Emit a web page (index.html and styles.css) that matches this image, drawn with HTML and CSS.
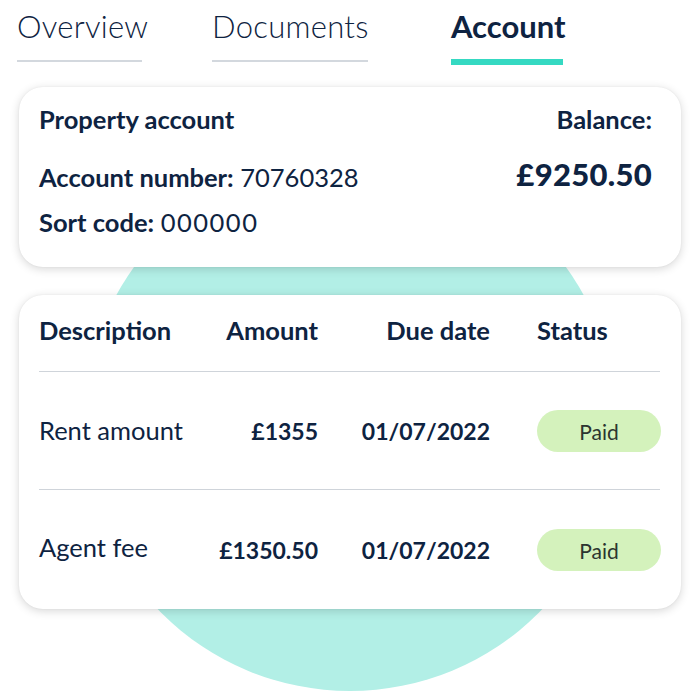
FILE: index.html
```html
<!DOCTYPE html>
<html>
<head>
<meta charset="utf-8">
<link rel="stylesheet" href="styles.css">
</head>
<body>
<div class="page">
  <div class="blob"></div>
  <nav class="tabs">
    <div class="tab tab-overview">Overview</div>
    <div class="tab tab-documents">Documents</div>
    <div class="tab tab-account active">Account</div>
  </nav>
  <section class="card account-card">
    <div class="acc-left">
      <div class="acc-title">Property account</div>
      <div class="acc-line acc-number"><b>Account number:</b> <span class="val">70760328</span></div>
      <div class="acc-line acc-sort"><b>Sort code:</b> <span class="val wide">000000</span></div>
    </div>
    <div class="acc-right">
      <div class="acc-title">Balance:</div>
      <div class="balance">£9250.50</div>
    </div>
  </section>
  <section class="card table-card">
    <div class="row head">
      <div class="c-desc">Description</div>
      <div class="c-amt">Amount</div>
      <div class="c-date">Due date</div>
      <div class="c-status">Status</div>
    </div>
    <div class="row item">
      <div class="c-desc">Rent amount</div>
      <div class="c-amt num">£1355</div>
      <div class="c-date num">01/07/2022</div>
      <div class="c-status"><span class="pill">Paid</span></div>
    </div>
    <div class="row item last">
      <div class="c-desc">Agent fee</div>
      <div class="c-amt num">£1350.50</div>
      <div class="c-date num">01/07/2022</div>
      <div class="c-status"><span class="pill">Paid</span></div>
    </div>
  </section>
</div>
</body>
</html>
```

FILE: styles.css
```css
* { box-sizing: border-box; }
html, body { margin: 0; padding: 0; background: #ffffff; }
body {
  font-family: Lato, "Noto Sans", sans-serif;
  color: #0e2341;
  width: 700px;
  height: 700px;
  overflow: hidden;
}
.page {
  position: relative;
  width: 700px;
  height: 700px;
  padding: 0 19px 0 19px;
}
.blob {
  position: absolute;
  left: 83px;
  top: 157px;
  width: 534px;
  height: 534px;
  border-radius: 50%;
  background: #b2efe6;
  z-index: 0;
}
.tabs {
  position: relative;
  z-index: 1;
  display: flex;
  height: 87px;
  padding-top: 6px;
}
.tab {
  font-size: 31px;
  font-weight: 300;
  line-height: 40px;
  height: 56px;
  letter-spacing: 0.3px;
  border-bottom: 2px solid #d3d8de;
}
.tab-overview { margin-left: -2px; width: 125px; }
.tab-documents { margin-left: 70px; width: 156px; }
.tab-account {
  margin-left: 83px;
  width: 112px;
  font-weight: 700;
  height: 59px;
  border-bottom: 6px solid #35d9c2;
  letter-spacing: 0;
}
.card {
  position: relative;
  z-index: 1;
  background: #fff;
  border-radius: 24px;
  box-shadow: 0 2px 10px rgba(0, 0, 0, 0.16), 0 0 2px rgba(0,0,0,0.06);
}
.account-card {
  height: 180px;
  display: flex;
  justify-content: space-between;
  padding: 16px 29px 0 20px;
}
.acc-title {
  font-size: 25.5px;
  font-weight: 700;
  line-height: 32px;
}
.acc-line {
  font-size: 25.5px;
  font-weight: 400;
  line-height: 32px;
}
.acc-line b { font-weight: 700; }
.val.wide { letter-spacing: 1.5px; }
.acc-number { margin-top: 26px; }
.acc-sort { margin-top: 13px; }
.acc-right { text-align: right; }
.balance {
  font-size: 31px;
  font-weight: 900;
  line-height: 40px;
  margin-top: 19px;
  letter-spacing: 0.3px;
}
.table-card {
  margin-top: 28px;
  height: 314px;
  padding: 0 21px 0 20px;
}
.row {
  display: grid;
  grid-template-columns: 170px 109px 172px 1fr;
  align-items: center;
  font-size: 25.5px;
}
.head {
  height: 77px;
  padding-bottom: 6px;
  font-weight: 700;
  border-bottom: 1px solid #cfd4da;
}
.item {
  height: 118px;
  border-bottom: 1px solid #cfd4da;
}
.item.last { border-bottom: none; height: 119px; }
.c-amt, .c-date { text-align: right; }
.c-status { padding-left: 47px; }
.num { font-weight: 700; font-size: 23px; }
.pill {
  display: flex;
  align-items: center;
  justify-content: center;
  width: 124px;
  height: 42px;
  border-radius: 21px;
  background: #d4f2bc;
  color: #2c3530;
  font-size: 21px;
  font-weight: 400;
}
.item .c-desc { font-weight: 400; margin-top: -2px; }
.item.last .c-desc { margin-top: -6px; }
.item .pill { margin-top: 1px; }
```
